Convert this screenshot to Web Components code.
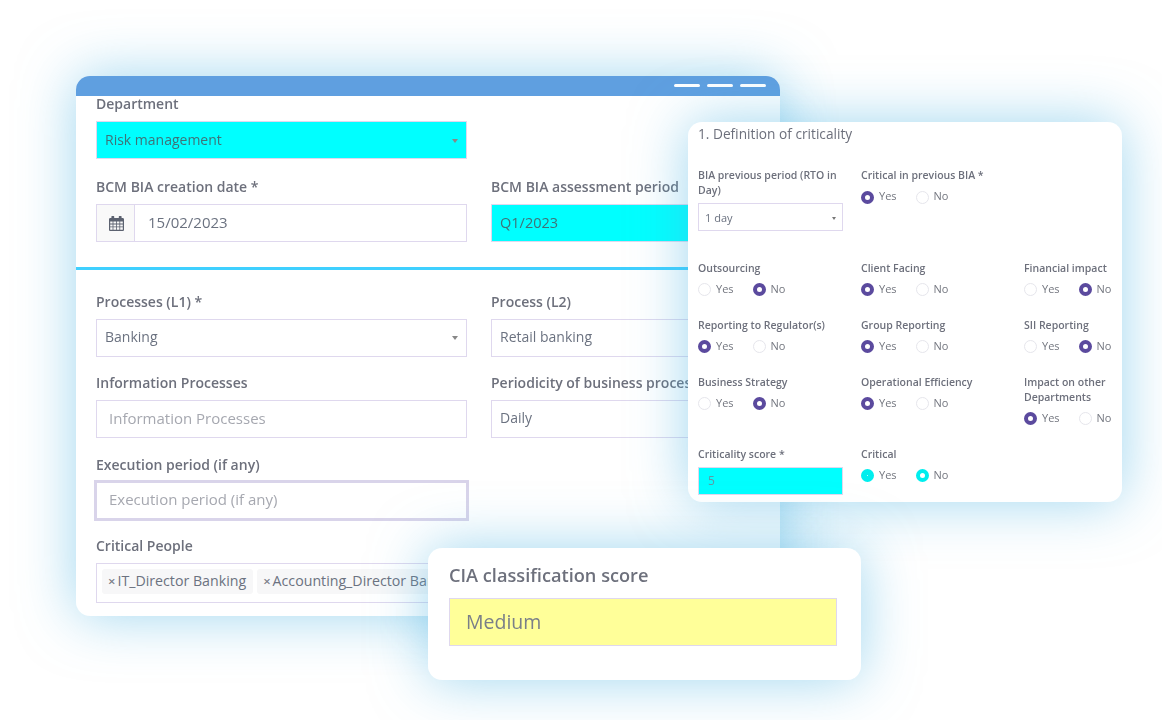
<!DOCTYPE html>
<html lang="en">
<head>
<meta charset="utf-8">
<title>BCM BIA</title>
<style>
html, body { margin: 0; padding: 0; background: #fff; }
body { font-family: "Open Sans", "Liberation Sans", sans-serif; color: #6d707c; }
.stage { position: relative; width: 1162px; height: 720px; overflow: hidden; filter: blur(.3px); }
.main { left: 76px; top: 76px; width: 704px; height: 540px; }
.criticality { left: 688px; top: 122px; width: 434px; height: 380px; }
.cia { left: 428px; top: 548px; width: 433px; height: 132px; }
</style>
</head>
<body>
<div class="stage">
  <app-window class="main" titlebar>
    <form-row style="margin-top: -1px">
      <form-field label="Department">
        <select-box value="Risk management" fill="#00ffff"></select-box>
      </form-field>
    </form-row>
    <form-row style="margin-top: 19px">
      <form-field label="BCM BIA creation date *">
        <date-box value="15/02/2023"></date-box>
      </form-field>
      <form-field label="BCM BIA assessment period">
        <text-box value="Q1/2023" fill="#00ffff"></text-box>
      </form-field>
    </form-row>
    <div style="height: 3px; background: #3fd0ff; margin: 25px -20px 22.5px"></div>
    <form-row>
      <form-field label="Processes (L1) *">
        <select-box value="Banking"></select-box>
      </form-field>
      <form-field label="Process (L2)">
        <select-box value="Retail banking"></select-box>
      </form-field>
    </form-row>
    <form-row style="margin-top: 17px">
      <form-field label="Information Processes">
        <text-box placeholder="Information Processes"></text-box>
      </form-field>
      <form-field label="Periodicity of business process">
        <select-box value="Daily"></select-box>
      </form-field>
    </form-row>
    <form-row style="margin-top: 18px">
      <form-field label="Execution period (if any)">
        <text-box placeholder="Execution period (if any)" focused></text-box>
      </form-field>
    </form-row>
    <form-row style="margin-top: 17px">
      <form-field label="Critical People">
        <tag-box>
          <tag-chip>IT_Director Banking</tag-chip>
          <tag-chip>Accounting_Director Banking</tag-chip>
        </tag-box>
      </form-field>
    </form-row>
  </app-window>

  <app-window class="criticality">
    <criticality-panel heading="1. Definition of criticality">
      <form-field small label="BIA previous period (RTO in Day)">
        <select-box small value="1 day"></select-box>
      </form-field>
      <form-field small label="Critical in previous BIA *"><yes-no value="yes"></yes-no></form-field>
      <span></span>

      <form-field small label="Outsourcing"><yes-no value="no"></yes-no></form-field>
      <form-field small label="Client Facing"><yes-no value="yes"></yes-no></form-field>
      <form-field small label="Financial impact"><yes-no value="no"></yes-no></form-field>

      <form-field small label="Reporting to Regulator(s)"><yes-no value="yes"></yes-no></form-field>
      <form-field small label="Group Reporting"><yes-no value="yes"></yes-no></form-field>
      <form-field small label="SII Reporting"><yes-no value="no"></yes-no></form-field>

      <form-field small label="Business Strategy"><yes-no value="no"></yes-no></form-field>
      <form-field small label="Operational Efficiency"><yes-no value="yes"></yes-no></form-field>
      <form-field small label="Impact on other Departments"><yes-no value="yes"></yes-no></form-field>

      <form-field small label="Criticality score *">
        <text-box small value="5" fill="#00ffff"></text-box>
      </form-field>
      <form-field small label="Critical"><yes-no value="no" cyan></yes-no></form-field>
    </criticality-panel>
  </app-window>

  <app-window class="cia">
    <score-panel heading="CIA classification score" value="Medium"></score-panel>
  </app-window>
</div>

<script>
const sheet = (css) => `<style>${css}</style>`;

class AppWindow extends HTMLElement {
  constructor() {
    super();
    const bar = this.hasAttribute("titlebar")
      ? `<header><i></i><i></i><i></i></header>`
      : "";
    this.attachShadow({ mode: "open" }).innerHTML = sheet(`
      :host {
        position: absolute;
        display: block;
        box-sizing: border-box;
        background: #fff;
        border-radius: 14px;
        box-shadow: 0 0 56px rgba(80, 180, 225, .55);
      }
      header {
        height: 19px;
        background: #5f9fe0;
        border-radius: 14px 14px 0 0;
        display: flex;
        justify-content: flex-end;
        align-items: center;
        gap: 7px;
        padding: 0 14px 1px 0;
      }
      header i { width: 26px; height: 3px; background: #fff; border-radius: 2px; }
      .body { padding: 0; }
      :host([titlebar]) .body { padding: 0 20px; }
    `) + bar + `<div class="body"><slot></slot></div>`;
  }
}

class FormRow extends HTMLElement {
  constructor() {
    super();
    this.attachShadow({ mode: "open" }).innerHTML = sheet(`
      :host { display: grid; grid-template-columns: 371px 264px; column-gap: 24px; }
    `) + `<slot></slot>`;
  }
}

class FormField extends HTMLElement {
  constructor() {
    super();
    this.attachShadow({ mode: "open" }).innerHTML = sheet(`
      :host { display: block; min-width: 0; }
      label {
        display: block;
        font: 600 14px/18px "Open Sans", sans-serif;
        color: #6d707c;
        margin-bottom: 8px;
        white-space: nowrap;
      }
      :host([small]) label {
        font-size: 10.5px;
        line-height: 15px;
        margin-bottom: 4px;
        white-space: normal;
      }
    `) + `<label>${this.getAttribute("label")}</label><slot></slot>`;
  }
}

const BOX_CSS = `
  :host { display: block; }
  .box {
    box-sizing: border-box;
    height: 38px;
    display: flex;
    align-items: center;
    padding: 0 8px;
    border: 1px solid #dfd8ee;
    background: var(--fill, #fff);
    font: 400 14px "Open Sans", sans-serif;
    color: var(--ink, #6b7280);
    white-space: nowrap;
    overflow: hidden;
  }
  :host([small]) .box { height: 28px; margin-top: 5px; font-size: 11px; padding: 0 6px; }
`;

const applyFill = (el) => {
  const fill = el.getAttribute("fill");
  if (fill) {
    el.style.setProperty("--fill", fill);
    el.style.setProperty("--ink", "#3f7278");
  }
};

class SelectBox extends HTMLElement {
  constructor() {
    super();
    this.attachShadow({ mode: "open" }).innerHTML = sheet(BOX_CSS + `
      .box { padding-bottom: 2px; }
      .box span { flex: 1; }
      .box i {
        width: 0; height: 0;
        margin-top: 3px;
        border-left: 3.5px solid transparent;
        border-right: 3.5px solid transparent;
        border-top: 4px solid #888;
      }
      :host([small]) .box i { border-width: 3px 2.5px 0; border-top-color: #777; }
    `) + `<div class="box"><span>${this.getAttribute("value")}</span><i></i></div>`;
    applyFill(this);
  }
}

class TextBox extends HTMLElement {
  constructor() {
    super();
    const value = this.getAttribute("value");
    const hint = this.getAttribute("placeholder");
    this.attachShadow({ mode: "open" }).innerHTML = sheet(BOX_CSS + `
      .box { padding-left: 12px; padding-bottom: 2px; font-size: 15px; }
      .hint { color: #a6a8b0; }
      :host([fill]) .box { padding-left: 8px; font-size: 14.5px; }
      :host([small]) .box { padding-left: 9px; color: #5f9aa5; font-size: 12px; }
      :host([focused]) .box {
        height: 41px;
        border: 3px solid #d9d4ea;
        margin: -2px -2px -1px;
      }
    `) + `<div class="box">${value ? value : `<span class="hint">${hint}</span>`}</div>`;
    applyFill(this);
  }
}

class DateBox extends HTMLElement {
  constructor() {
    super();
    this.attachShadow({ mode: "open" }).innerHTML = sheet(BOX_CSS + `
      .box { padding: 0; font-size: 15px; }
      .addon {
        width: 38px; height: 100%;
        box-sizing: border-box;
        display: flex; align-items: center; justify-content: center;
        background: #f9f9f9;
        border-right: 1px solid #dfd8ee;
      }
      .val { padding: 0 0 2px 13px; }
      svg { display: block; margin-left: 1px; }
    `) + `<div class="box"><div class="addon">
        <svg width="15" height="15" viewBox="0 0 15 15" fill="#5c6270">
          <path fill-rule="evenodd" d="M3 0h1.6a.6.6 0 0 1 .6.6V2h4.6V.6a.6.6 0 0 1 .6-.6H12a.6.6 0 0 1 .6.6V2h1.1c.7 0 1.3.6 1.3 1.3v10.4c0 .7-.6 1.3-1.3 1.3H1.3C.6 15 0 14.4 0 13.7V3.3C0 2.6.6 2 1.3 2h1.1V.6A.6.6 0 0 1 3 0zM1.2 5.6v2h2.4v-2zm3.2 0v2h2.6v-2zm3.4 0v2h2.6v-2zm3.4 0v2h2.6v-2zM1.2 8.4v2h2.4v-2zm3.2 0v2h2.6v-2zm3.4 0v2h2.6v-2zm3.4 0v2h2.6v-2zM1.2 11.2v2.6h2.4v-2.6zm3.2 0v2.6h2.6v-2.6zm3.4 0v2.6h2.6v-2.6zm3.4 0v2.6h2.6v-2.6z"/>
        </svg>
      </div><span class="val">${this.getAttribute("value")}</span></div>`;
  }
}

class TagBox extends HTMLElement {
  constructor() {
    super();
    this.attachShadow({ mode: "open" }).innerHTML = sheet(`
      :host {
        display: flex;
        box-sizing: border-box;
        height: 40px;
        width: 500px;
        align-items: flex-start;
        gap: 4px;
        padding: 5px 5px 0;
        border: 1px solid #dfd8ee;
        overflow: hidden;
      }
    `) + `<slot></slot>`;
  }
}

class TagChip extends HTMLElement {
  constructor() {
    super();
    this.attachShadow({ mode: "open" }).innerHTML = sheet(`
      :host {
        display: inline-flex;
        align-items: center;
        flex: none;
        height: 24px;
        padding: 0 7px 1px 6px;
        background: #f7f7f8;
        border-radius: 3px;
        font: 400 14.2px "Open Sans", sans-serif;
        color: #6b7280;
        white-space: nowrap;
      }
      b { font-weight: 600; font-size: 13px; margin-right: 2px; color: #7b7e88; }
    `) + `<b>×</b><slot></slot>`;
  }
}

class YesNo extends HTMLElement {
  constructor() {
    super();
    const value = this.getAttribute("value");
    const option = (name, text) => `<div class="opt">
      <i class="${value === name ? "on" : ""}"></i><span>${text}</span></div>`;
    this.attachShadow({ mode: "open" }).innerHTML = sheet(`
      :host { display: flex; --on: #5b4a9e; height: 18px; align-items: center; }
      :host([cyan]) { --on: #00eeee; }
      .opt { display: flex; align-items: center; gap: 5px; width: 54.5px; flex: none; }
      .opt + .opt { width: auto; }
      i {
        box-sizing: border-box;
        width: 13px; height: 13px;
        border-radius: 50%;
        border: 1px solid #e6e6ec;
        background: #fff;
        margin-top: 2px;
      }
      i.on { border: 4px solid var(--on); }
      :host([cyan]) i { border: 6.5px solid var(--on); }
      :host([cyan]) i.on { border: 4px solid var(--on); }
      span { font: 400 11px/14px "Open Sans", sans-serif; color: #73767f; }
    `) + option("yes", "Yes") + option("no", "No");
  }
}

class CriticalityPanel extends HTMLElement {
  constructor() {
    super();
    this.attachShadow({ mode: "open" }).innerHTML = sheet(`
      :host { display: block; padding: 3px 10px 0; }
      h2 {
        margin: 0 0 25px;
        font: 400 13.7px/18px "Open Sans", sans-serif;
        color: #6d707c;
      }
      .grid {
        display: grid;
        grid-template-columns: 145px 145px 87px;
        column-gap: 18px;
        row-gap: 20px;
      }
      ::slotted(:first-child) { padding-bottom: 9.5px; }
    `) + `<h2>${this.getAttribute("heading")}</h2><div class="grid"><slot></slot></div>`;
  }
}

class ScorePanel extends HTMLElement {
  constructor() {
    super();
    this.attachShadow({ mode: "open" }).innerHTML = sheet(`
      :host { display: block; padding: 15px 24px 0 21px; }
      h2 {
        margin: 0 0 11px;
        font: 600 18.2px/24px "Open Sans", sans-serif;
        color: #6d707c;
      }
      div {
        box-sizing: border-box;
        height: 48px;
        display: flex;
        align-items: center;
        padding: 0 0 2px 16px;
        background: #ffff99;
        border: 1px solid #dfd8ee;
        font: 400 19.5px "Open Sans", sans-serif;
        color: #7a7f88;
      }
    `) + `<h2>${this.getAttribute("heading")}</h2><div>${this.getAttribute("value")}</div>`;
  }
}

customElements.define("app-window", AppWindow);
customElements.define("form-row", FormRow);
customElements.define("form-field", FormField);
customElements.define("select-box", SelectBox);
customElements.define("text-box", TextBox);
customElements.define("date-box", DateBox);
customElements.define("tag-box", TagBox);
customElements.define("tag-chip", TagChip);
customElements.define("yes-no", YesNo);
customElements.define("criticality-panel", CriticalityPanel);
customElements.define("score-panel", ScorePanel);
</script>
</body>
</html>
